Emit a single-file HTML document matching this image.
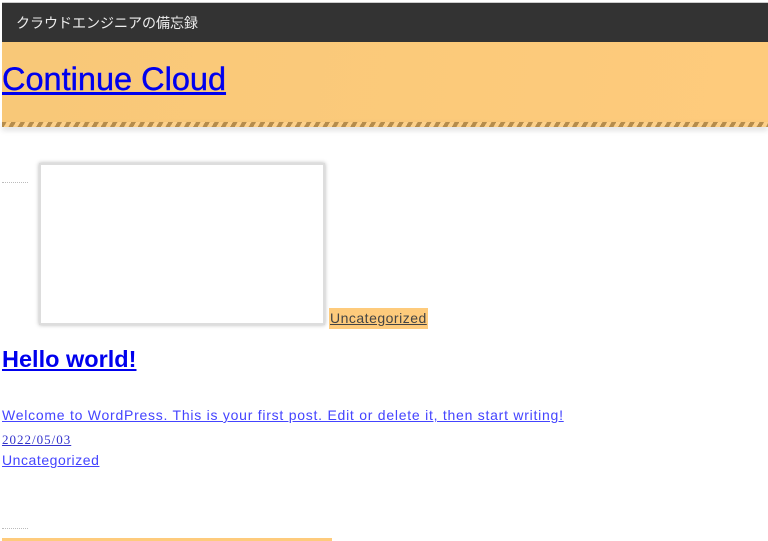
<!DOCTYPE html>
<html><head><meta charset="utf-8"><style>
body{margin:0;background:#fff;font-family:"Liberation Sans","Noto Sans CJK JP",sans-serif;width:768px;height:541px;overflow:hidden;position:relative}
.top{position:absolute;left:2px;top:2px;right:0;height:40px;background:#333;color:#eee;font-size:14px;line-height:40px;padding-left:14px;border-top:1px solid #ccc;box-sizing:border-box}
.hdr{position:absolute;left:2px;top:42px;right:0;height:80px;background:linear-gradient(100deg,#f8c878,#fecb7c)}
.hdr a{position:absolute;left:0;top:19px;font-size:32.5px;color:#00e;text-decoration:underline;-webkit-text-stroke:.4px #00e}
.stripe{position:absolute;left:2px;right:0;top:122px;height:5px;background:repeating-linear-gradient(120deg,#b58c4c 0 4px,#fcd08a 4px 8px);box-shadow:0 3px 6px rgba(0,0,0,.15)}
.dots{position:absolute;left:2px;width:26px;border-top:1px dotted #bbb}
.img{position:absolute;left:39px;top:163px;width:282px;height:158px;border:2px solid #ddd;box-shadow:0 0 4px rgba(0,0,0,.3);background:#fff}
.cat{position:absolute;left:329px;top:308px;height:21px;background:#fecb7c;color:#444;font-size:14px;line-height:21px;padding:0 1px;letter-spacing:.5px;text-decoration:underline}
.h{position:absolute;left:2px;top:346px;font-size:23.5px;font-weight:bold;color:#00e;text-decoration:underline}
.p{position:absolute;left:2px;top:407px;font-size:14px;letter-spacing:.75px;color:#44f;text-decoration:underline}
.d{position:absolute;left:2px;top:432px;font-size:13px;letter-spacing:1px;color:#33c;text-decoration:underline;font-family:"Liberation Serif",serif}
.c{position:absolute;left:2px;top:452px;font-size:14px;letter-spacing:.55px;color:#44f;text-decoration:underline}
.bar{position:absolute;left:2px;top:538px;width:330px;height:3px;background:#fecb7c}
</style></head><body>
<div class="top">クラウドエンジニアの備忘録</div>
<div class="hdr"><a>Continue Cloud</a></div>
<div class="stripe"></div>
<div class="dots" style="top:182px"></div>
<div class="img"></div>
<div class="cat">Uncategorized</div>
<div class="h">Hello world!</div>
<div class="p">Welcome to WordPress. This is your first post. Edit or delete it, then start writing!</div>
<div class="d">2022/05/03</div>
<div class="c">Uncategorized</div>
<div class="dots" style="top:528px"></div>
<div class="bar"></div>
</body></html>
